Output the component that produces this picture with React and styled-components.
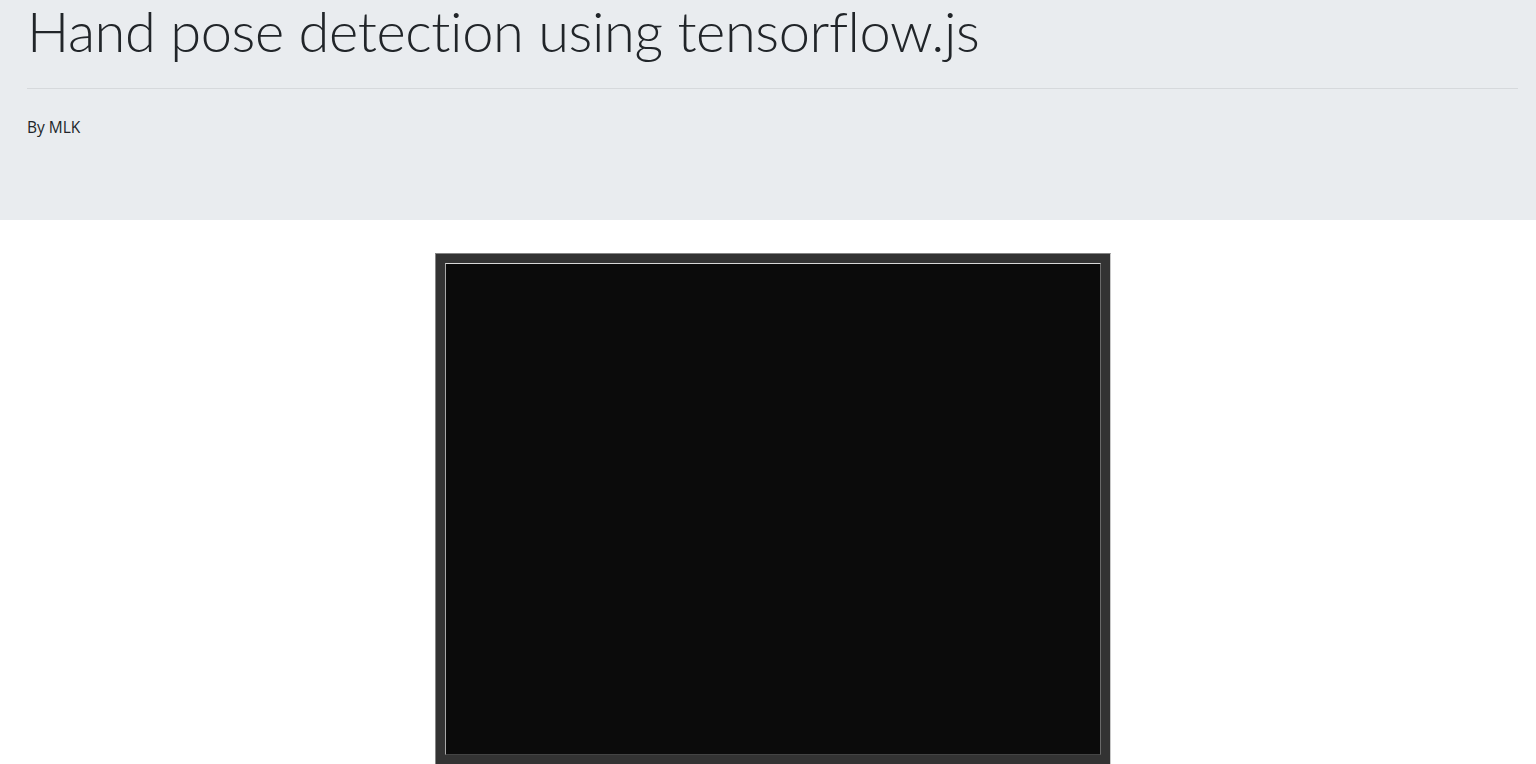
import React from "react";
import styled, { createGlobalStyle } from "styled-components";

const GlobalStyle = createGlobalStyle`
  html, body {
    margin: 0;
    padding: 0;
    background: #fff;
    font-family: "Open Sans", "Noto Sans", sans-serif;
    color: #212529;
  }
`;

const Jumbotron = styled.header`
  background-color: #e9ecef;
  height: 220px;
  box-sizing: border-box;
  padding: 0 18px 0 27px;
`;

const Title = styled.h1`
  margin: 0;
  font-family: "Lato", "Open Sans", sans-serif;
  font-weight: 300;
  font-size: 56px;
  line-height: 62px;
  color: #212529;
  letter-spacing: -0.4px;
  font-variant-ligatures: none;
`;

const Rule = styled.hr`
  margin: 26px 0 0;
  border: 0;
  border-top: 1px solid rgba(0, 0, 0, 0.08);
`;

const Byline = styled.p`
  margin: 26px 0 0;
  font-size: 15.5px;
  line-height: 24px;
  color: #212529;
`;

const Stage = styled.main`
  display: flex;
  justify-content: center;
  padding: 33px 0 0 10px;
`;

const Frame = styled.div`
  width: 676px;
  box-sizing: border-box;
  background: #333;
  border: 1px solid #858585;
  border-right-color: #c8c8c8;
  padding: 9px;
`;

const Screen = styled.div`
  height: 490px;
  background: #0b0b0b;
  border-top: 1px solid #d8d8d8;
  border-left: 1px solid #a8a8a8;
  border-right: 1px solid #6a6a6a;
  border-bottom: 1px solid #444;
`;

export default function App() {
  return (
    <>
      <GlobalStyle />
      <Jumbotron>
        <Title>Hand pose detection using tensorflow.js</Title>
        <Rule />
        <Byline>By MLK</Byline>
      </Jumbotron>
      <Stage>
        <Frame>
          <Screen />
        </Frame>
      </Stage>
    </>
  );
}
